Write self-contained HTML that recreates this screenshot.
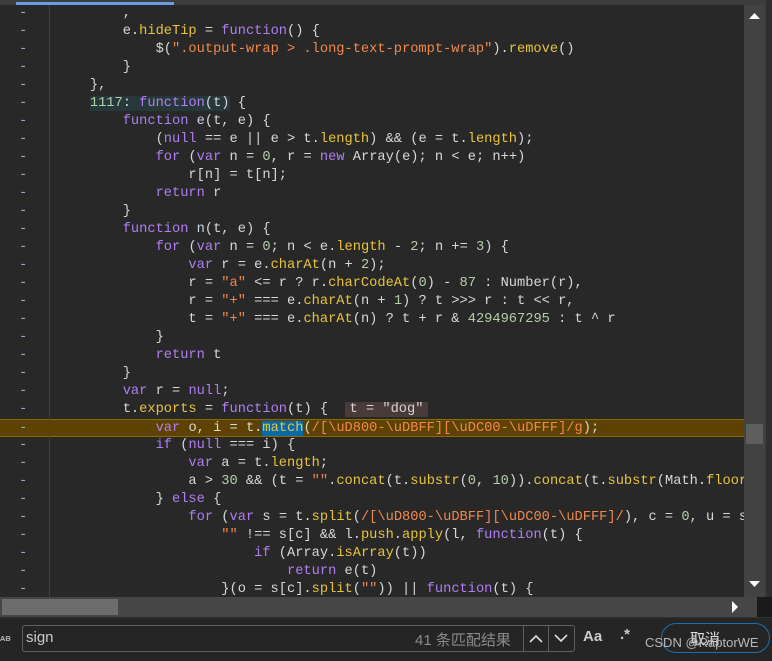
<!DOCTYPE html><html><head><meta charset="utf-8"><style>
*{margin:0;padding:0;box-sizing:border-box}
body{width:772px;height:661px;background:#282828;position:relative;overflow:hidden;font-family:"Liberation Mono",monospace}
.top{position:absolute;left:0;top:0;width:772px;height:5px;background:#3c3c3c}
.top i{position:absolute;left:16px;top:2px;width:158px;height:3px;background:#6a9ce8}
.gut{position:absolute;left:49px;top:5px;width:1px;height:592px;background:#404040}
.code{position:absolute;left:0;top:5px;width:744px;height:592px;overflow:hidden}
.l{position:relative;height:18px;line-height:18px;font-size:13.7px;color:#d8d8d8;white-space:pre}
.l b{position:absolute;left:19px;font-weight:normal;color:#8fb0d0}
.l span.t{position:absolute;left:57px}
.k{color:#b07ef0}.p{color:#e8c33c}.s{color:#f0884c}.n{color:#b5cea8}.v{color:#c8d6ea}
.hl{background:#5e4300;border-top:1px solid #8a6a00;border-bottom:1px solid #8a6a00}
.m{background:#0a6aa8}
.tip{background:#4a3b3b;color:#d4d4d4;padding:0 5px}
.cur{background:#27383a}
.vs{position:absolute;left:744px;top:5px;width:21px;height:592px;background:#424242}
.vs .th{position:absolute;left:2px;top:419px;width:17px;height:20px;background:#5e5e5e}
.rs{position:absolute;left:765px;top:0;width:7px;height:617px;background:#2f2f2f;border-left:1px solid #3c3c3c}
.hs{position:absolute;left:0;top:597px;width:757px;height:20px;background:#464646}
.hs .th{position:absolute;left:2px;top:2px;width:116px;height:16px;background:#6c6c6c}
.corner{position:absolute;left:757px;top:597px;width:15px;height:20px;background:#1a1a1a}
.bar{position:absolute;left:0;top:617px;width:772px;height:44px;background:#252526;border-top:1px solid #303030}
.inp{position:absolute;left:22px;top:7px;width:553px;height:27px;border:1px solid #5f5f5f;border-radius:3px;font-family:"Liberation Sans","Noto Sans CJK SC",sans-serif;font-size:15px;color:#cccccc}
</style></head><body>
<div class="top"><i></i></div>
<div class="code">
<div class="l"><b>-</b><span class="t">        ,</span></div>
<div class="l"><b>-</b><span class="t">        e.<span class="p">hideTip</span> = <span class="k">function</span>() {</span></div>
<div class="l"><b>-</b><span class="t">            $(<span class="s">".output-wrap &gt; .long-text-prompt-wrap"</span>).<span class="p">remove</span>()</span></div>
<div class="l"><b>-</b><span class="t">        }</span></div>
<div class="l"><b>-</b><span class="t">    },</span></div>
<div class="l"><b>-</b><span class="t">    <span class="cur"><span class="n">1117</span>: <span class="k">function</span>(t)</span> {</span></div>
<div class="l"><b>-</b><span class="t">        <span class="k">function</span> <span class="v">e</span>(t, e) {</span></div>
<div class="l"><b>-</b><span class="t">            (<span class="k">null</span> == e || e &gt; t.<span class="p">length</span>) &amp;&amp; (e = t.<span class="p">length</span>);</span></div>
<div class="l"><b>-</b><span class="t">            <span class="k">for</span> (<span class="k">var</span> n = <span class="n">0</span>, r = <span class="k">new</span> Array(e); n &lt; e; n++)</span></div>
<div class="l"><b>-</b><span class="t">                r[n] = t[n];</span></div>
<div class="l"><b>-</b><span class="t">            <span class="k">return</span> r</span></div>
<div class="l"><b>-</b><span class="t">        }</span></div>
<div class="l"><b>-</b><span class="t">        <span class="k">function</span> <span class="v">n</span>(t, e) {</span></div>
<div class="l"><b>-</b><span class="t">            <span class="k">for</span> (<span class="k">var</span> n = <span class="n">0</span>; n &lt; e.<span class="p">length</span> - <span class="n">2</span>; n += <span class="n">3</span>) {</span></div>
<div class="l"><b>-</b><span class="t">                <span class="k">var</span> r = e.<span class="p">charAt</span>(n + <span class="n">2</span>);</span></div>
<div class="l"><b>-</b><span class="t">                r = <span class="s">"a"</span> &lt;= r ? r.<span class="p">charCodeAt</span>(<span class="n">0</span>) - <span class="n">87</span> : Number(r),</span></div>
<div class="l"><b>-</b><span class="t">                r = <span class="s">"+"</span> === e.<span class="p">charAt</span>(n + <span class="n">1</span>) ? t &gt;&gt;&gt; r : t &lt;&lt; r,</span></div>
<div class="l"><b>-</b><span class="t">                t = <span class="s">"+"</span> === e.<span class="p">charAt</span>(n) ? t + r &amp; <span class="n">4294967295</span> : t ^ r</span></div>
<div class="l"><b>-</b><span class="t">            }</span></div>
<div class="l"><b>-</b><span class="t">            <span class="k">return</span> t</span></div>
<div class="l"><b>-</b><span class="t">        }</span></div>
<div class="l"><b>-</b><span class="t">        <span class="k">var</span> r = <span class="k">null</span>;</span></div>
<div class="l"><b>-</b><span class="t">        t.<span class="p">exports</span> = <span class="k">function</span>(t) {  <span class="tip">t = "dog"</span></span></div>
<div class="l hl"><b>-</b><span class="t">            <span class="k">var</span> o, i = t.<span class="p m">match</span>(<span class="s">/[\uD800-\uDBFF][\uDC00-\uDFFF]/g</span>);</span></div>
<div class="l"><b>-</b><span class="t">            <span class="k">if</span> (<span class="k">null</span> === i) {</span></div>
<div class="l"><b>-</b><span class="t">                <span class="k">var</span> a = t.<span class="p">length</span>;</span></div>
<div class="l"><b>-</b><span class="t">                a &gt; <span class="n">30</span> &amp;&amp; (t = <span class="s">""</span>.<span class="p">concat</span>(t.<span class="p">substr</span>(<span class="n">0</span>, <span class="n">10</span>)).<span class="p">concat</span>(t.<span class="p">substr</span>(Math.<span class="p">floor</span>(</span></div>
<div class="l"><b>-</b><span class="t">            } <span class="k">else</span> {</span></div>
<div class="l"><b>-</b><span class="t">                <span class="k">for</span> (<span class="k">var</span> s = t.<span class="p">split</span>(<span class="s">/[\uD800-\uDBFF][\uDC00-\uDFFF]/</span>), c = <span class="n">0</span>, u = s</span></div>
<div class="l"><b>-</b><span class="t">                    <span class="s">""</span> !== s[c] &amp;&amp; l.<span class="p">push</span>.<span class="p">apply</span>(l, <span class="k">function</span>(t) {</span></div>
<div class="l"><b>-</b><span class="t">                        <span class="k">if</span> (Array.<span class="p">isArray</span>(t))</span></div>
<div class="l"><b>-</b><span class="t">                            <span class="k">return</span> e(t)</span></div>
<div class="l"><b>-</b><span class="t">                    }(o = s[c].<span class="p">split</span>(<span class="s">""</span>)) || <span class="k">function</span>(t) {</span></div>
</div>
<div class="gut"></div>
<div class="vs"><div class="th"></div>
<svg style="position:absolute;left:5px;top:7px" width="11" height="8"><path d="M0 7L5.5 1L11 7Z" fill="#fff"/></svg>
<svg style="position:absolute;left:5px;top:575px" width="11" height="8"><path d="M0 1L5.5 7L11 1Z" fill="#fff"/></svg></div>
<div class="rs"></div>
<div class="hs"><div class="th"></div><svg style="position:absolute;left:731px;top:4px" width="8" height="12"><path d="M1 0L7 6L1 12Z" fill="#fff"/></svg></div>
<div class="corner"></div>
<div class="bar">
<div style="position:absolute;left:0;top:15px;font-size:9px;color:#aaa;font-family:'Liberation Sans',sans-serif;font-weight:bold">ᴀʙ</div>
<div class="inp"><span style="position:absolute;left:3px;top:3px">sign</span>
<span style="position:absolute;left:392px;top:3px;color:#8a8a8a">41 条匹配结果</span>
<div style="position:absolute;left:500px;top:0;width:1px;height:25px;background:#5f5f5f"></div>
<div style="position:absolute;left:525px;top:0;width:1px;height:25px;background:#5f5f5f"></div>
<svg style="position:absolute;left:506px;top:8px" width="14" height="9"><path d="M1 8L7 2L13 8" stroke="#ddd" stroke-width="1.6" fill="none"/></svg>
<svg style="position:absolute;left:531px;top:8px" width="14" height="9"><path d="M1 1L7 7L13 1" stroke="#ddd" stroke-width="1.6" fill="none"/></svg>
</div>
<div style="position:absolute;left:583px;top:10px;color:#ccc;font:bold 15px 'Liberation Sans',sans-serif">Aa</div>
<div style="position:absolute;left:620px;top:8px;color:#ccc;font:bold 15px 'Liberation Sans',sans-serif">.*</div>
<div style="position:absolute;left:661px;top:5px;width:109px;height:30px;border:1px solid #1a6fb0;border-radius:15px"></div>
<div style="position:absolute;left:690px;top:10px;color:#ddd;font:15px 'Liberation Sans','Noto Sans CJK SC',sans-serif">取消</div>
<div style="position:absolute;left:645px;top:17px;color:#b8b8b8;font:13px 'Liberation Sans',sans-serif">CSDN @RaptorWE</div>
</div>
</body></html>
